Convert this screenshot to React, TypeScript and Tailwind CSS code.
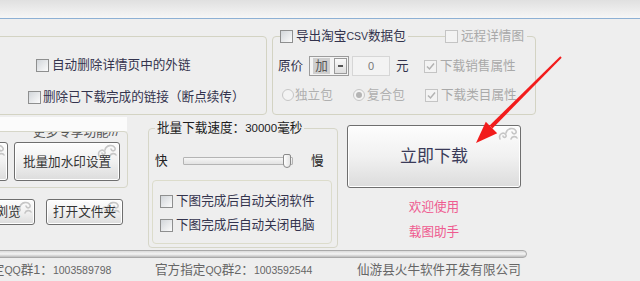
import React from "react";

const FONT = "font-['Liberation_Sans','Noto_Sans_CJK_SC',sans-serif]";

const Swirl = ({ className = "" }: { className?: string }) => (
  <svg className={className} width="22" height="14" viewBox="0 0 22 14" fill="none" stroke="#c6c6c6" strokeWidth="1.6" strokeLinecap="round">
    <path d="M3 12 C1 7 7 4 9 8 C10 11 6 11 6 9" />
    <path d="M9 6 C10 1 17 0 19 4 C20 7 16 8 15 5" />
    <path d="M14 12 C15 9 19 9 20 11" />
  </svg>
);

function Btn({ children, className = "", textClass = "" }: { children: React.ReactNode; className?: string; textClass?: string }) {
  return (
    <div className={`relative shrink-0 flex items-center justify-center rounded-[3px] border border-[#6e6e6e] bg-linear-to-b from-[#fdfdfd] via-[#f1f1f1] to-[#dcdcdc] shadow-[inset_0_0_0_1px_#ffffff] overflow-hidden ${className}`}>
      <Swirl className="absolute right-[1px] top-[1px]" />
      <span className={`relative whitespace-nowrap ${textClass}`}>{children}</span>
    </div>
  );
}

function Check({ disabled = false, checked = false }: { disabled?: boolean; checked?: boolean }) {
  return (
    <span className={`w-[13px] h-[13px] shrink-0 border flex items-center justify-center ${disabled ? "border-[#c4c4c4] bg-[#f3f3f3]" : "border-[#8e8f8f] bg-linear-to-br from-[#d2d6da] to-[#fbfbfb]"}`}>
      {checked && (
        <svg width="9" height="9" viewBox="0 0 9 9">
          <path d="M1 4.5 L3.5 7 L8 1.5" stroke="#b2b2b2" strokeWidth="1.5" fill="none" />
        </svg>
      )}
    </span>
  );
}

function Radio({ selected = false }: { selected?: boolean }) {
  return (
    <span className="w-[12px] h-[12px] shrink-0 rounded-full border border-[#c6c6c6] bg-[#f3f3f3] flex items-center justify-center">
      {selected && <span className="w-[6px] h-[6px] rounded-full bg-[#b4b4b4]" />}
    </span>
  );
}

export default function App() {
  return (
    <div className={`relative w-[640px] h-[281px] overflow-hidden bg-[#eeeeee] ${FONT} text-[12.6px] leading-[16px]`}>
      {/* top bar */}
      <div className="h-[18px] bg-linear-to-b from-[#e0e0e0] to-[#f6f6f6]" />
      <div className="h-px bg-[#8db0d4]" />

      {/* row 1 */}
      <div className="mt-[17px] flex">
        <div className="ml-[-13px] w-[280px] h-[79px] shrink-0 border border-[#d3d3c3] rounded-[4px] flex flex-col text-[#33334d]">
          <div className="mt-[20px] ml-[48px] h-[16px] flex items-center">
            <Check />
            <span className="ml-[3px] whitespace-nowrap">自动删除详情页中的外链</span>
          </div>
          <div className="mt-[16px] ml-[40px] h-[16px] flex items-center">
            <Check />
            <span className="ml-[2px] whitespace-nowrap">删除已下载完成的链接（断点续传）</span>
          </div>
        </div>

        <div className="relative ml-[5px] w-[264px] h-[79px] shrink-0 border border-[#d3d3c3] rounded-[4px] flex flex-col text-[#33334d]">
          <div className="absolute left-[7px] top-[-9px] h-[16px] flex items-center bg-[#eeeeee] pr-[2px]">
            <Check />
            <span className="ml-[3px] whitespace-nowrap">导出淘宝<span className="text-[10.5px]">CSV</span>数据包</span>
          </div>
          <div className="absolute left-[172px] top-[-9px] h-[16px] flex items-center bg-[#eeeeee] pr-[3px] text-[#a9a9a9]">
            <Check disabled />
            <span className="ml-[3px] whitespace-nowrap">远程详情图</span>
          </div>

          <div className="mt-[19px] h-[20px] flex items-center">
            <span className="ml-[5px] w-[26px] whitespace-nowrap">原价</span>
            <div className="ml-[5px] w-[40px] h-[20px] border border-[#9c9c9c] bg-[#f4f4f4] flex items-center">
              <span className="ml-[3px] w-[17px] h-[16px] bg-[#cfcfcf] text-[#555] flex items-center justify-center">加</span>
              <span className="ml-[4px] w-[13px] h-[16px] border border-[#9a9a9a] bg-linear-to-b from-[#fafafa] to-[#dedede] flex items-center justify-center">
                <span className="w-[5px] h-[2px] bg-[#555]" />
              </span>
            </div>
            <div className="ml-[3px] w-[38px] h-[20px] border border-[#d6d6d6] bg-[#f3f3f3] flex items-center justify-center text-[11px] text-[#777]">0</div>
            <span className="ml-[6px] w-[14px]">元</span>
            <span className="ml-[14px]"><Check disabled checked /></span>
            <span className="ml-[3px] whitespace-nowrap text-[#a9a9a9]">下载销售属性</span>
          </div>

          <div className="mt-[11px] h-[16px] flex items-center text-[#b0b0b0]">
            <span className="ml-[9px]"><Radio /></span>
            <span className="ml-[1px] w-[38px] whitespace-nowrap">独立包</span>
            <span className="ml-[20px]"><Radio selected /></span>
            <span className="ml-[2px] w-[38px] whitespace-nowrap">复合包</span>
            <span className="ml-[20px]"><Check disabled checked /></span>
            <span className="ml-[3px] whitespace-nowrap text-[#a9a9a9]">下载类目属性</span>
          </div>
        </div>
      </div>

      {/* row 2 */}
      <div className="mt-[2px] h-[131px] flex">
        {/* left column */}
        <div className="w-[128px] shrink-0 flex flex-col">
          <div className="w-[127px] h-[14px] bg-[#fbfbfb]" />
          <div className="ml-[-10px] w-[138px] h-[57px] border border-[#d6d6c8] rounded-[4px] flex flex-col">
            <div className="ml-[42px] h-[7px] overflow-hidden text-[#555]">
              <div className="mt-[-8px] whitespace-nowrap leading-[16px]">更多专享功能///</div>
            </div>
            <div className="mt-[3px] flex">
              <Btn className="ml-[-13px] w-[30px] h-[39px]" textClass="text-[#333]">{""}</Btn>
              <Btn className="ml-[6px] w-[106px] h-[39px]" textClass="text-[#333]">批量加水印设置</Btn>
            </div>
          </div>
          <div className="mt-[11px] flex">
            <Btn className="ml-[-19px] w-[54px] h-[26px]" textClass="text-[#333]">浏览</Btn>
            <Btn className="ml-[11px] w-[77px] h-[26px]" textClass="text-[#333]">打开文件夹</Btn>
          </div>
        </div>

        {/* middle group */}
        <div className="relative ml-[20px] mt-[11px] w-[190px] h-[120px] shrink-0 border border-[#d6d6c8] rounded-[4px] flex flex-col">
          <div className="absolute left-[6px] top-[-9px] h-[16px] px-[2px] bg-[#eeeeee] text-[#1c1c1c] whitespace-nowrap">
            批量下载速度：<span className="text-[11.5px]">30000</span>毫秒
          </div>
          <div className="mt-[24px] h-[16px] flex items-center text-[#222]">
            <span className="ml-[6px] w-[12px]">快</span>
            <div className="relative ml-[16px] w-[110px] h-[8px] border border-[#b4b4b4] rounded-[1px] bg-linear-to-b from-[#f6f6f6] to-[#e2e2e2]">
              <div className="absolute left-[99px] top-[-4px] w-[8px] h-[14px] border border-[#8a8a8a] rounded-t-[2px] rounded-b-[4px] bg-linear-to-r from-[#ffffff] to-[#e4e4e4]" />
            </div>
            <span className="ml-[18px] w-[13px]">慢</span>
          </div>
          <div className="mt-[11px] ml-[3px] w-[180px] h-[64px] border border-[#dcdccb] rounded-[4px] flex flex-col text-[#33334d]">
            <div className="mt-[12px] ml-[7px] h-[16px] flex items-center">
              <Check />
              <span className="ml-[3px] whitespace-nowrap">下图完成后自动关闭软件</span>
            </div>
            <div className="mt-[8px] ml-[7px] h-[16px] flex items-center">
              <Check />
              <span className="ml-[3px] whitespace-nowrap">下图完成后自动关闭电脑</span>
            </div>
          </div>
        </div>

        {/* right column */}
        <div className="ml-[9px] w-[174px] shrink-0 flex flex-col items-center">
          <Btn className="mt-[8px] w-[174px] h-[63px] shadow-[inset_0_0_0_1px_#ffffff,0_1px_1px_rgba(0,0,0,0.15)]" textClass="text-[17px] leading-[20px] text-[#3a3a58]">立即下载</Btn>
          <div className="mt-[11px] h-[16px] text-[#ee5b90] whitespace-nowrap">欢迎使用</div>
          <div className="mt-[9px] h-[16px] text-[#ee5b90] whitespace-nowrap">载图助手</div>
        </div>
      </div>

      {/* progress bar */}
      <div className="mt-[2px] ml-[-4px] w-[531px] h-[8px] rounded-full border border-[#a9a9a9] bg-linear-to-b from-[#dadada] via-[#f4f4f4] to-[#bdbdbd]" />

      {/* status */}
      <div className="mt-[4px] h-[16px] flex items-center text-[#666] whitespace-nowrap">
        <span className="ml-[-46px] w-[167px] shrink-0">官方指定<span className="text-[10.5px]">QQ</span>群1：<span className="text-[10.5px]">1003589798</span></span>
        <span className="ml-[34px] w-[167px] shrink-0">官方指定<span className="text-[10.5px]">QQ</span>群2：<span className="text-[10.5px]">1003592544</span></span>
        <span className="ml-[35px] shrink-0">仙游县火牛软件开发有限公司</span>
      </div>

      {/* red arrow */}
      <svg className="absolute left-0 top-0 pointer-events-none" width="640" height="281" viewBox="0 0 640 281">
        <polygon points="561.7,57.7 560.3,56.3 489.6,125.6 492.4,128.4" fill="#f21c1c" />
        <polygon points="476,143 485.8,121.8 497.2,133.2" fill="#f21c1c" />
      </svg>
    </div>
  );
}
